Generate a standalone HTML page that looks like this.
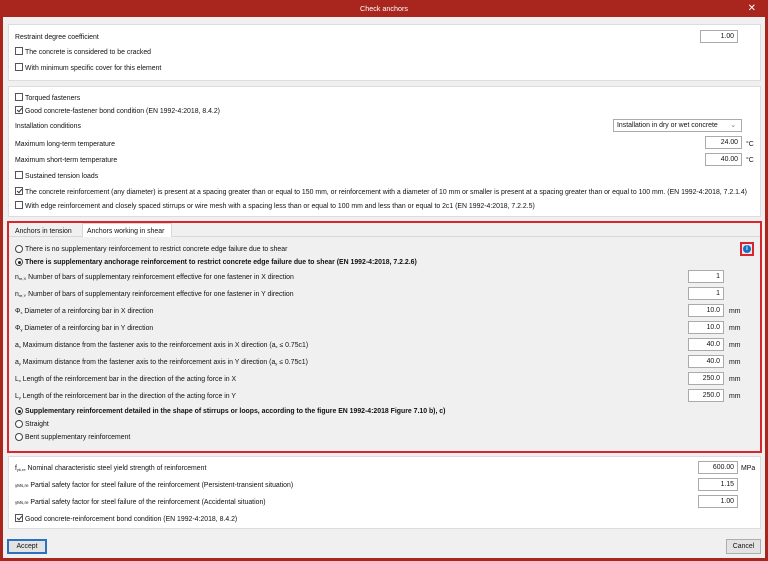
<!DOCTYPE html>
<html><head><meta charset="utf-8"><style>
*{margin:0;padding:0;box-sizing:border-box}
body{width:768px;height:561px;overflow:hidden;background:#a8261e;font-family:"Liberation Sans",sans-serif;font-size:6.9px;color:#111;position:relative}
.a{position:absolute;white-space:nowrap}
#win{position:absolute;left:3px;top:17px;width:762px;height:541px;background:#f0f0f0}
.title{position:absolute;left:0;top:0;width:768px;height:17px;color:#fff;font-size:7.2px;text-align:center;line-height:18px}
.x{position:absolute;right:12px;top:0;color:#fff;font-size:10px;line-height:17px}
.pan{position:absolute;background:#fff;border:1px solid #dcdcdc}
.cb{position:absolute;width:8px;height:8px;border:1px solid #555;background:#fff}
.cb.c::after{content:"";position:absolute;left:2px;top:0px;width:2px;height:4px;border:solid #333;border-width:0 1px 1px 0;transform:rotate(40deg)}
.rb{position:absolute;width:8px;height:8px;border:1px solid #444;border-radius:50%;background:#fff}
.rb.c::after{content:"";position:absolute;left:1.5px;top:1.5px;width:3px;height:3px;border-radius:50%;background:#222}
.in{position:absolute;height:13px;border:1px solid #aaa;background:#fff;text-align:right;padding-right:3px;line-height:11px}
.t{line-height:8px;margin-top:1px}
b{font-weight:bold}
sub{font-size:4px;vertical-align:-1px}
</style></head><body>
<div class="title">Check anchors</div><div class="x">✕</div>
<div id="win"></div>
<div class="pan" style="left:8px;top:24px;width:753px;height:57px"></div>
<div class="a t" style="left:15px;top:33px">Restraint degree coefficient</div>
<div class="in" style="left:700px;top:30px;width:38px">1.00</div>
<div class="cb" style="left:15px;top:47px"></div><div class="a t" style="left:25px;top:48px">The concrete is considered to be cracked</div>
<div class="cb" style="left:15px;top:63px"></div><div class="a t" style="left:25px;top:64px">With minimum specific cover for this element</div>
<div class="pan" style="left:8px;top:86px;width:753px;height:131px"></div>
<div class="cb" style="left:15px;top:93px"></div><div class="a t" style="left:25px;top:94px">Torqued fasteners</div>
<div class="cb c" style="left:15px;top:106px"></div><div class="a t" style="left:25px;top:107px">Good concrete-fastener bond condition (EN 1992-4:2018, 8.4.2)</div>
<div class="a t" style="left:15px;top:122px">Installation conditions</div>
<div class="in" style="left:613px;top:119px;width:129px;text-align:left;padding-left:3px">Installation in dry or wet concrete<span style="position:absolute;right:5px;color:#777">⌄</span></div>
<div class="a t" style="left:15px;top:140px">Maximum long-term temperature</div>
<div class="in" style="left:705px;top:136px;width:37px">24.00</div><div class="a t" style="left:746px;top:140px">°C</div>
<div class="a t" style="left:15px;top:156px">Maximum short-term temperature</div>
<div class="in" style="left:705px;top:153px;width:37px">40.00</div><div class="a t" style="left:746px;top:156px">°C</div>
<div class="cb" style="left:15px;top:171px"></div><div class="a t" style="left:25px;top:172px">Sustained tension loads</div>
<div class="cb c" style="left:15px;top:187px"></div><div class="a t" style="left:25px;top:188px">The concrete reinforcement (any diameter) is present at a spacing greater than or equal to 150 mm, or reinforcement with a diameter of 10 mm or smaller is present at a spacing greater than or equal to 100 mm. (EN 1992-4:2018, 7.2.1.4)</div>
<div class="cb" style="left:15px;top:201px"></div><div class="a t" style="left:25px;top:202px">With edge reinforcement and closely spaced stirrups or wire mesh with a spacing less than or equal to 100 mm and less than or equal to 2c1 (EN 1992-4:2018, 7.2.2.5)</div>
<div class="a" style="left:7px;top:221px;width:755px;height:232px;border:2px solid #d8262e"></div>
<div class="a" style="left:9px;top:236px;width:751px;height:1px;background:#d8d8d8"></div>
<div class="a t" style="left:15px;top:227px">Anchors in tension</div>
<div class="a" style="left:82px;top:223px;width:90px;height:14px;background:#fff;border:1px solid #d8d8d8;border-bottom:none"></div>
<div class="a t" style="left:87px;top:227px">Anchors working in shear</div>
<div class="a" style="left:740px;top:242px;width:14px;height:14px;border:2px solid #d8262e;background:#e8e8e8"></div>
<div class="a" style="left:743px;top:245px;width:8px;height:8px;border-radius:50%;background:#1a6fc4;color:#fff;font-size:6px;line-height:8px;text-align:center;font-weight:bold">i</div>
<div class="rb" style="left:15px;top:245px"></div><div class="a t" style="left:25px;top:245px">There is no supplementary reinforcement to restrict concrete edge failure due to shear</div>
<div class="rb c" style="left:15px;top:258px"></div><div class="a t" style="left:25px;top:258px"><b>There is supplementary anchorage reinforcement to restrict concrete edge failure due to shear (EN 1992-4:2018, 7.2.2.6)</b></div>
<div class="a t" style="left:15px;top:273px">n<sub>re,X</sub> Number of bars of supplementary reinforcement effective for one fastener in X direction</div>
<div class="in" style="left:688px;top:270px;width:36px">1</div>
<div class="a t" style="left:15px;top:290px">n<sub>re,Y</sub> Number of bars of supplementary reinforcement effective for one fastener in Y direction</div>
<div class="in" style="left:688px;top:287px;width:36px">1</div>
<div class="a t" style="left:15px;top:307px">Φ<sub>x</sub> Diameter of a reinforcing bar in X direction</div>
<div class="in" style="left:688px;top:304px;width:36px">10.0</div><div class="a t" style="left:729px;top:307px">mm</div>
<div class="a t" style="left:15px;top:324px">Φ<sub>y</sub> Diameter of a reinforcing bar in Y direction</div>
<div class="in" style="left:688px;top:321px;width:36px">10.0</div><div class="a t" style="left:729px;top:324px">mm</div>
<div class="a t" style="left:15px;top:341px">a<sub>x</sub> Maximum distance from the fastener axis to the reinforcement axis in X direction (a<sub>x</sub> ≤ 0.75c1)</div>
<div class="in" style="left:688px;top:338px;width:36px">40.0</div><div class="a t" style="left:729px;top:341px">mm</div>
<div class="a t" style="left:15px;top:358px">a<sub>y</sub> Maximum distance from the fastener axis to the reinforcement axis in Y direction (a<sub>y</sub> ≤ 0.75c1)</div>
<div class="in" style="left:688px;top:355px;width:36px">40.0</div><div class="a t" style="left:729px;top:358px">mm</div>
<div class="a t" style="left:15px;top:375px">L<sub>x</sub> Length of the reinforcement bar in the direction of the acting force in X</div>
<div class="in" style="left:688px;top:372px;width:36px">250.0</div><div class="a t" style="left:729px;top:375px">mm</div>
<div class="a t" style="left:15px;top:392px">L<sub>y</sub> Length of the reinforcement bar in the direction of the acting force in Y</div>
<div class="in" style="left:688px;top:389px;width:36px">250.0</div><div class="a t" style="left:729px;top:392px">mm</div>
<div class="rb c" style="left:15px;top:407px"></div><div class="a t" style="left:25px;top:407px"><b>Supplementary reinforcement detailed in the shape of stirrups or loops, according to the figure EN 1992-4:2018 Figure 7.10 b), c)</b></div>
<div class="rb" style="left:15px;top:420px"></div><div class="a t" style="left:25px;top:420px">Straight</div>
<div class="rb" style="left:15px;top:433px"></div><div class="a t" style="left:25px;top:433px">Bent supplementary reinforcement</div>
<div class="pan" style="left:8px;top:456px;width:753px;height:73px"></div>
<div class="a t" style="left:15px;top:464px">f<sub>yk,re</sub> Nominal characteristic steel yield strength of reinforcement</div>
<div class="in" style="left:698px;top:461px;width:40px">600.00</div><div class="a t" style="left:741px;top:464px">MPa</div>
<div class="a t" style="left:15px;top:481px"><span style="font-size:4.5px">γMs,re</span> Partial safety factor for steel failure of the reinforcement (Persistent-transient situation)</div>
<div class="in" style="left:698px;top:478px;width:40px">1.15</div>
<div class="a t" style="left:15px;top:498px"><span style="font-size:4.5px">γMs,re</span> Partial safety factor for steel failure of the reinforcement (Accidental situation)</div>
<div class="in" style="left:698px;top:495px;width:40px">1.00</div>
<div class="cb c" style="left:15px;top:514px"></div><div class="a t" style="left:25px;top:515px">Good concrete-reinforcement bond condition (EN 1992-4:2018, 8.4.2)</div>
<div class="a" style="left:7px;top:539px;width:40px;height:15px;border:2px solid #2d70c0;background:#e3e3e3;text-align:center;line-height:11px">Accept</div>
<div class="a" style="left:726px;top:539px;width:35px;height:15px;border:1px solid #adadad;background:#e3e3e3;text-align:center;line-height:13px">Cancel</div>
</body></html>
